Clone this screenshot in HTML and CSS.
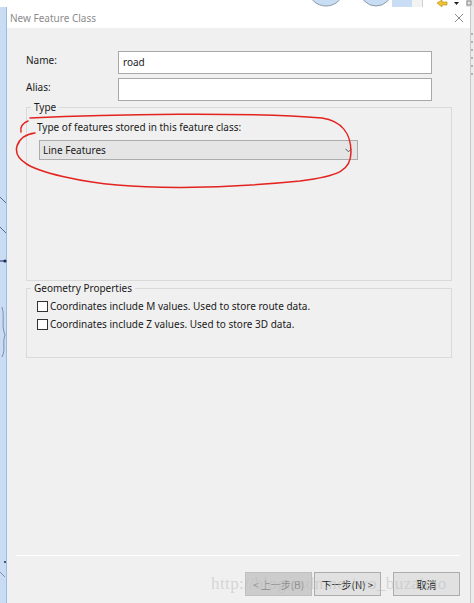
FILE: index.html
```html
<!DOCTYPE html>
<html lang="zh-CN">
<head>
    <meta charset="UTF-8">
    <meta name="viewport" content="width=device-width, initial-scale=1.0">
    <title>New Feature Class</title>
    <link rel="stylesheet" href="styles.css">
</head>
<body>
    <div class="screen">
        <div class="top-strip">
            <svg width="474" height="7" viewBox="0 0 474 7">
                <rect x="0" y="0" width="474" height="7" fill="#ffffff"/>
                <circle cx="326" cy="-12" r="18" fill="#c9ddf5" stroke="#8d9aa8" stroke-width="1"/>
                <rect x="392" y="0" width="20" height="7" fill="#c9ddf5"/>
                <circle cx="376" cy="-10" r="16" fill="#c9ddf5" stroke="#8d9aa8" stroke-width="1"/>
                <rect x="412" y="0" width="10" height="7" fill="#f3f3f3"/>
                <rect x="422" y="0" width="1" height="7" fill="#d0d0d0"/>
                <path d="M437 3 L442 0 L442 2 L447 2 L447 5 L442 5 L442 7 Z" fill="#f1c232" stroke="#b08a10" stroke-width="0.6"/>
                <path d="M454 2 L459 2 L456.5 5 Z" fill="#222"/>
                <rect x="466" y="0" width="8" height="7" fill="#e4e4e4"/>
                <rect x="467" y="1" width="4" height="4" fill="none" stroke="#777" stroke-width="0.8"/>
            </svg>
        </div>

        <div class="left-strip">
            <svg width="7" height="596" viewBox="0 0 7 596">
                <path d="M0 190 L6 196" stroke="#3b4d7a" stroke-width="0.8" fill="none"/>
                <path d="M0 220 L6 226" stroke="#3b4d7a" stroke-width="0.8" fill="none"/>
                <circle cx="5" cy="254" r="1.6" fill="#1d2b5a"/>
                <path d="M0 254 L6 254" stroke="#1d2b5a" stroke-width="1" fill="none"/>
                <path d="M2 300 C5 310 1 318 5 328 C2 336 6 342 2 350" stroke="#6b7a99" stroke-width="0.8" fill="none"/>
                <circle cx="5" cy="555" r="1" fill="#1d2b5a"/>
                <path d="M0 565 L5 570" stroke="#6b7a99" stroke-width="0.8" fill="none"/>
            </svg>
        </div>

        <div class="dialog">
            <div class="titlebar">
                <span class="title">New Feature Class</span>
                <svg class="close" width="10" height="10" viewBox="0 0 10 10">
                    <path d="M1 1 L9 9 M9 1 L1 9" stroke="#8a8a8a" stroke-width="1" fill="none"/>
                </svg>
            </div>

            <div class="dialog-body">
                <div class="field-row">
                    <label class="field-label">Name:</label>
                    <div class="text-input">road</div>
                </div>
                <div class="field-row">
                    <label class="field-label">Alias:</label>
                    <div class="text-input"></div>
                </div>

                <fieldset class="group group-type">
                    <legend>Type</legend>
                    <div class="group-text">Type of features stored in this feature class:</div>
                    <div class="select">
                        <span>Line Features</span>
                        <svg class="chevron" width="7" height="5" viewBox="0 0 7 5">
                            <path d="M0.5 0.8 L3.5 3.8 L6.5 0.8" stroke="#555" stroke-width="1" fill="none"/>
                        </svg>
                    </div>
                </fieldset>

                <fieldset class="group group-geometry">
                    <legend>Geometry Properties</legend>
                    <div class="check-row">
                        <span class="checkbox"></span>
                        <span>Coordinates include M values. Used to store route data.</span>
                    </div>
                    <div class="check-row">
                        <span class="checkbox"></span>
                        <span>Coordinates include Z values. Used to store 3D data.</span>
                    </div>
                </fieldset>

                <div class="footer">
                    <div class="separator"></div>
                    <div class="buttons">
                        <button class="btn btn-disabled">&lt; 上一步(B)</button>
                        <button class="btn">下一步(N) &gt;</button>
                        <button class="btn btn-cancel">取消</button>
                    </div>
                </div>
            </div>
        </div>

        <div class="right-strip">
            <div class="tick"></div>
            <div class="tick"></div>
            <div class="tick"></div>
            <div class="tick"></div>
            <div class="tick"></div>
            <div class="tick"></div>
        </div>

        <svg class="annotation" width="474" height="603" viewBox="0 0 474 603">
            <path d="M30 118 C110 114 250 112 322 118 C342 121 351 134 351 152 C351 170 340 176 300 181 C230 188 130 192 70 178 C30 170 13 160 17 146 C20 137 27 134 35 133" stroke="#e3231f" stroke-width="1.5" fill="none" stroke-linecap="round"/>
            <path d="M21 132 C20 127 23 123 28 121" stroke="#e3231f" stroke-width="1.5" fill="none" stroke-linecap="round"/>
        </svg>

        <div class="watermark">http://blog.csdn.net/wo_buzaitao</div>
    </div>
</body>
</html>
```

FILE: styles.css
```css
* {
    margin: 0;
    padding: 0;
    box-sizing: border-box;
}

body {
    width: 474px;
    height: 603px;
    overflow: hidden;
    background: #ffffff;
    font-family: "Noto Sans", "Noto Sans CJK SC", sans-serif;
    font-size: 9.5px;
    color: #1a1a1a;
}

.screen {
    position: relative;
    display: grid;
    grid-template-columns: 7px 463px 4px;
    grid-template-rows: 7px 596px;
    width: 474px;
    height: 603px;
}

.top-strip {
    grid-column: 1 / 4;
    height: 7px;
    overflow: hidden;
}

.top-strip svg {
    display: block;
}

.left-strip {
    background: #c8dcf4;
    border-right: 1px solid #9dbbe0;
}

.left-strip svg {
    display: block;
}

.right-strip {
    background: #ececec;
    border-left: 1px solid #c8c8c8;
    display: flex;
    flex-direction: column;
    gap: 6px;
    padding-top: 26px;
}

.tick {
    height: 2px;
    margin-right: 1px;
    background: #b5b5b5;
}

/* dialog */

.dialog {
    display: flex;
    flex-direction: column;
    background: #f0f0f0;
}

.titlebar {
    height: 21px;
    background: #ffffff;
    display: flex;
    align-items: center;
    justify-content: space-between;
    padding: 0 6px 0 3px;
}

.title {
    font-size: 10px;
    color: #8c8c8c;
}

.close {
    display: block;
}

.dialog-body {
    flex: 1;
    display: flex;
    flex-direction: column;
    padding: 23px 12px 7px 19px;
}

.field-row {
    display: flex;
    align-items: center;
    height: 23px;
    margin-bottom: 4px;
}

.field-label {
    width: 92px;
    font-size: 10px;
    position: relative;
    top: -3px;
}

.text-input {
    width: 314px;
    height: 23px;
    background: #ffffff;
    border: 1px solid #a9a9a9;
    padding: 3px 4px;
    font-size: 10px;
}

.group {
    border: 1px solid #dadada;
    width: 426px;
}

.group legend {
    margin-left: -6px;
    padding: 0 3px;
    font-size: 10px;
    line-height: 12px;
}

.group-type {
    height: 180px;
    margin-top: -4px;
    padding: 7px 0 0 10px;
}

.group-text {
    font-size: 10px;
    margin-bottom: 6px;
}

.select {
    width: 319px;
    height: 20px;
    margin-left: 2px;
    background: #e5e5e5;
    border: 1px solid #acacac;
    display: flex;
    align-items: center;
    justify-content: space-between;
    padding: 0 5px 0 3px;
    font-size: 10px;
}

.chevron {
    display: block;
}

.group-geometry {
    height: 76px;
    margin-top: 1px;
    padding: 3px 0 0 10px;
}

.check-row {
    display: flex;
    align-items: center;
    gap: 2px;
    height: 18px;
    font-size: 10px;
}

.checkbox {
    width: 11px;
    height: 11px;
    background: #ffffff;
    border: 1px solid #333333;
}

.footer {
    margin-top: auto;
    margin-left: -10px;
    width: 444px;
}

.separator {
    height: 1px;
    background: #a0a0a0;
    border-bottom: 1px solid #ffffff;
    margin-bottom: 16px;
}

.buttons {
    display: flex;
    justify-content: flex-end;
    gap: 2px;
}

.btn {
    width: 67px;
    height: 24px;
    background: #e1e1e1;
    border: 1px solid #adadad;
    font-family: "Noto Sans CJK SC", "Noto Sans", sans-serif;
    font-size: 10px;
    color: #1a1a1a;
}

.btn-disabled {
    background: #cccccc;
    border-color: #bfbfbf;
    color: #8a8a8a;
}

.btn-cancel {
    margin-left: 10px;
}

/* overlays */

.annotation {
    position: absolute;
    left: 0;
    top: 0;
    pointer-events: none;
}

.watermark {
    position: absolute;
    left: 211px;
    top: 574px;
    font-family: "Liberation Serif", serif;
    font-size: 17px;
    letter-spacing: 0.4px;
    color: rgba(190, 190, 190, 0.55);
    pointer-events: none;
}
```
